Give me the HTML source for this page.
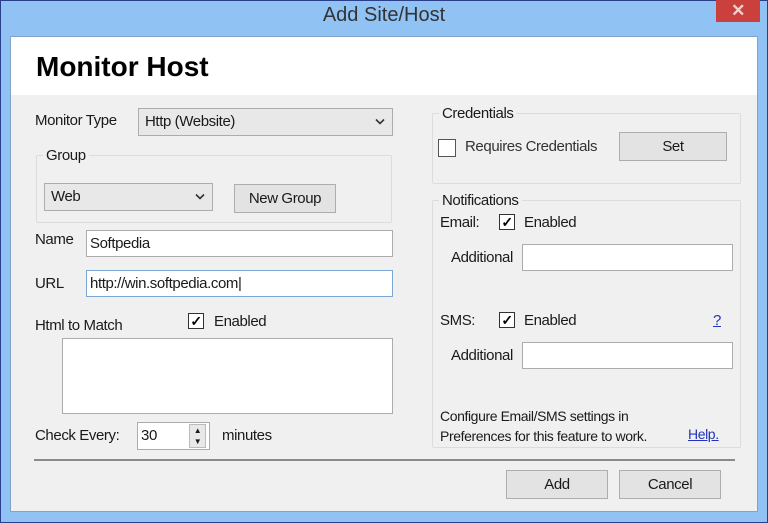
<!DOCTYPE html>
<html><head><meta charset="utf-8"><style>
*{box-sizing:border-box;margin:0;padding:0}
body{width:768px;height:523px;overflow:hidden;background:#8fc0f2;font-family:"Liberation Sans",sans-serif;font-size:15px;color:#1a1a1a;position:relative;letter-spacing:-0.4px}
.frame{position:absolute;left:0;top:0;width:768px;height:523px;border:1px solid #2a3f8a;background:#90c2f4}
.title{position:absolute;left:0;width:768px;top:4px;text-align:center;font-size:20px;color:#333;letter-spacing:0}
.close{position:absolute;left:716px;top:0;width:44px;height:22px;background:#c9403c;color:#f4d0d0;text-align:center;font-size:17px;line-height:22px;font-weight:bold}
.client{position:absolute;left:10px;top:36px;width:748px;height:476px;background:#f0f0f0;border:1px solid #7ea3cc}
.hdr{position:absolute;left:0;top:0;width:746px;height:58px;background:#fff}
.hdr h1{position:absolute;left:25px;top:14px;font-size:28px;font-weight:bold;color:#000;letter-spacing:0}
.a{position:absolute}
.box{position:absolute;border:1px solid #dcdcdc;border-radius:2px}
.lg{position:absolute;background:#f0f0f0;padding:0 3px}
.in{position:absolute;background:#fff;border:1px solid #acacac;height:27px;padding:3px 3px;line-height:19px}
.btn{position:absolute;background:#e3e3e3;border:1px solid #adadad;text-align:center}
.sel{position:absolute;background:#e8e8e8;border:1px solid #acacac;padding:3px 6px;line-height:19px}
.chev{position:absolute;right:7px;top:9px}
.cb{position:absolute;width:16px;height:16px;border:1px solid #333;background:#fff;font-size:14px;line-height:14px;text-align:center;font-weight:bold;color:#000}
</style></head><body>
<div class="frame"></div>
<div class="title">Add Site/Host</div>
<div class="close">✕</div>
<div class="client">
<div class="hdr"><h1>Monitor Host</h1></div>
</div>
<div class="a" style="left:35px;top:112px">Monitor Type</div>
<div class="sel" style="left:138px;top:108px;width:255px;height:28px">Http (Website)<svg class="chev" width="10" height="7"><path d="M1 1.5L5 5.5L9 1.5" stroke="#333" stroke-width="1.6" fill="none"/></svg></div>
<div class="box" style="left:36px;top:155px;width:356px;height:68px"></div>
<div class="lg" style="left:43px;top:147px">Group</div>
<div class="sel" style="left:44px;top:183px;width:169px;height:28px">Web<svg class="chev" width="10" height="7"><path d="M1 1.5L5 5.5L9 1.5" stroke="#333" stroke-width="1.6" fill="none"/></svg></div>
<div class="btn" style="left:234px;top:184px;width:102px;height:29px;line-height:27px">New Group</div>
<div class="a" style="left:35px;top:231px">Name</div>
<div class="in" style="left:86px;top:230px;width:307px">Softpedia</div>
<div class="a" style="left:35px;top:275px">URL</div>
<div class="in" style="left:86px;top:270px;width:307px;border-color:#7aa7d6">http://win.softpedia.com|</div>
<div class="a" style="left:35px;top:317px">Html to Match</div>
<div class="cb" style="left:188px;top:313px">✓</div>
<div class="a" style="left:214px;top:313px">Enabled</div>
<div class="in" style="left:62px;top:338px;width:331px;height:76px"></div>
<div class="a" style="left:35px;top:427px">Check Every:</div>
<div class="in" style="left:137px;top:422px;width:73px;height:28px">30</div>
<div class="a" style="left:189px;top:424px;width:17px;height:24px;background:#e8e8e8;border:1px solid #bbb;font-size:8px;text-align:center;line-height:11px">▲<br>▼</div>
<div class="a" style="left:222px;top:427px">minutes</div>
<div class="box" style="left:432px;top:113px;width:309px;height:71px"></div>
<div class="lg" style="left:439px;top:105px">Credentials</div>
<div class="cb" style="left:438px;top:139px;width:18px;height:18px;border-color:#555"></div>
<div class="a" style="left:465px;top:138px;color:#333">Requires Credentials</div>
<div class="btn" style="left:619px;top:132px;width:108px;height:29px;line-height:27px">Set</div>
<div class="box" style="left:432px;top:200px;width:309px;height:248px"></div>
<div class="lg" style="left:439px;top:192px">Notifications</div>
<div class="a" style="left:440px;top:214px">Email:</div>
<div class="cb" style="left:499px;top:214px">✓</div>
<div class="a" style="left:524px;top:214px">Enabled</div>
<div class="a" style="left:451px;top:249px">Additional</div>
<div class="in" style="left:522px;top:244px;width:211px">&nbsp;</div>
<div class="a" style="left:440px;top:312px">SMS:</div>
<div class="cb" style="left:499px;top:312px">✓</div>
<div class="a" style="left:524px;top:312px">Enabled</div>
<div class="a" style="left:713px;top:312px;color:#2233bb;text-decoration:underline">?</div>
<div class="a" style="left:451px;top:347px">Additional</div>
<div class="in" style="left:522px;top:342px;width:211px">&nbsp;</div>
<div class="a" style="left:440px;top:406px;font-size:14px;line-height:20px">Configure Email/SMS settings in<br>Preferences for this feature to work.</div>
<div class="a" style="left:688px;top:426px;font-size:14px;color:#2233bb;text-decoration:underline">Help.</div>
<div class="a" style="left:34px;top:459px;width:701px;height:2px;background:#8a8a8a"></div>
<div class="btn" style="left:506px;top:470px;width:102px;height:29px;line-height:27px">Add</div>
<div class="btn" style="left:619px;top:470px;width:102px;height:29px;line-height:27px">Cancel</div>
</body></html>
